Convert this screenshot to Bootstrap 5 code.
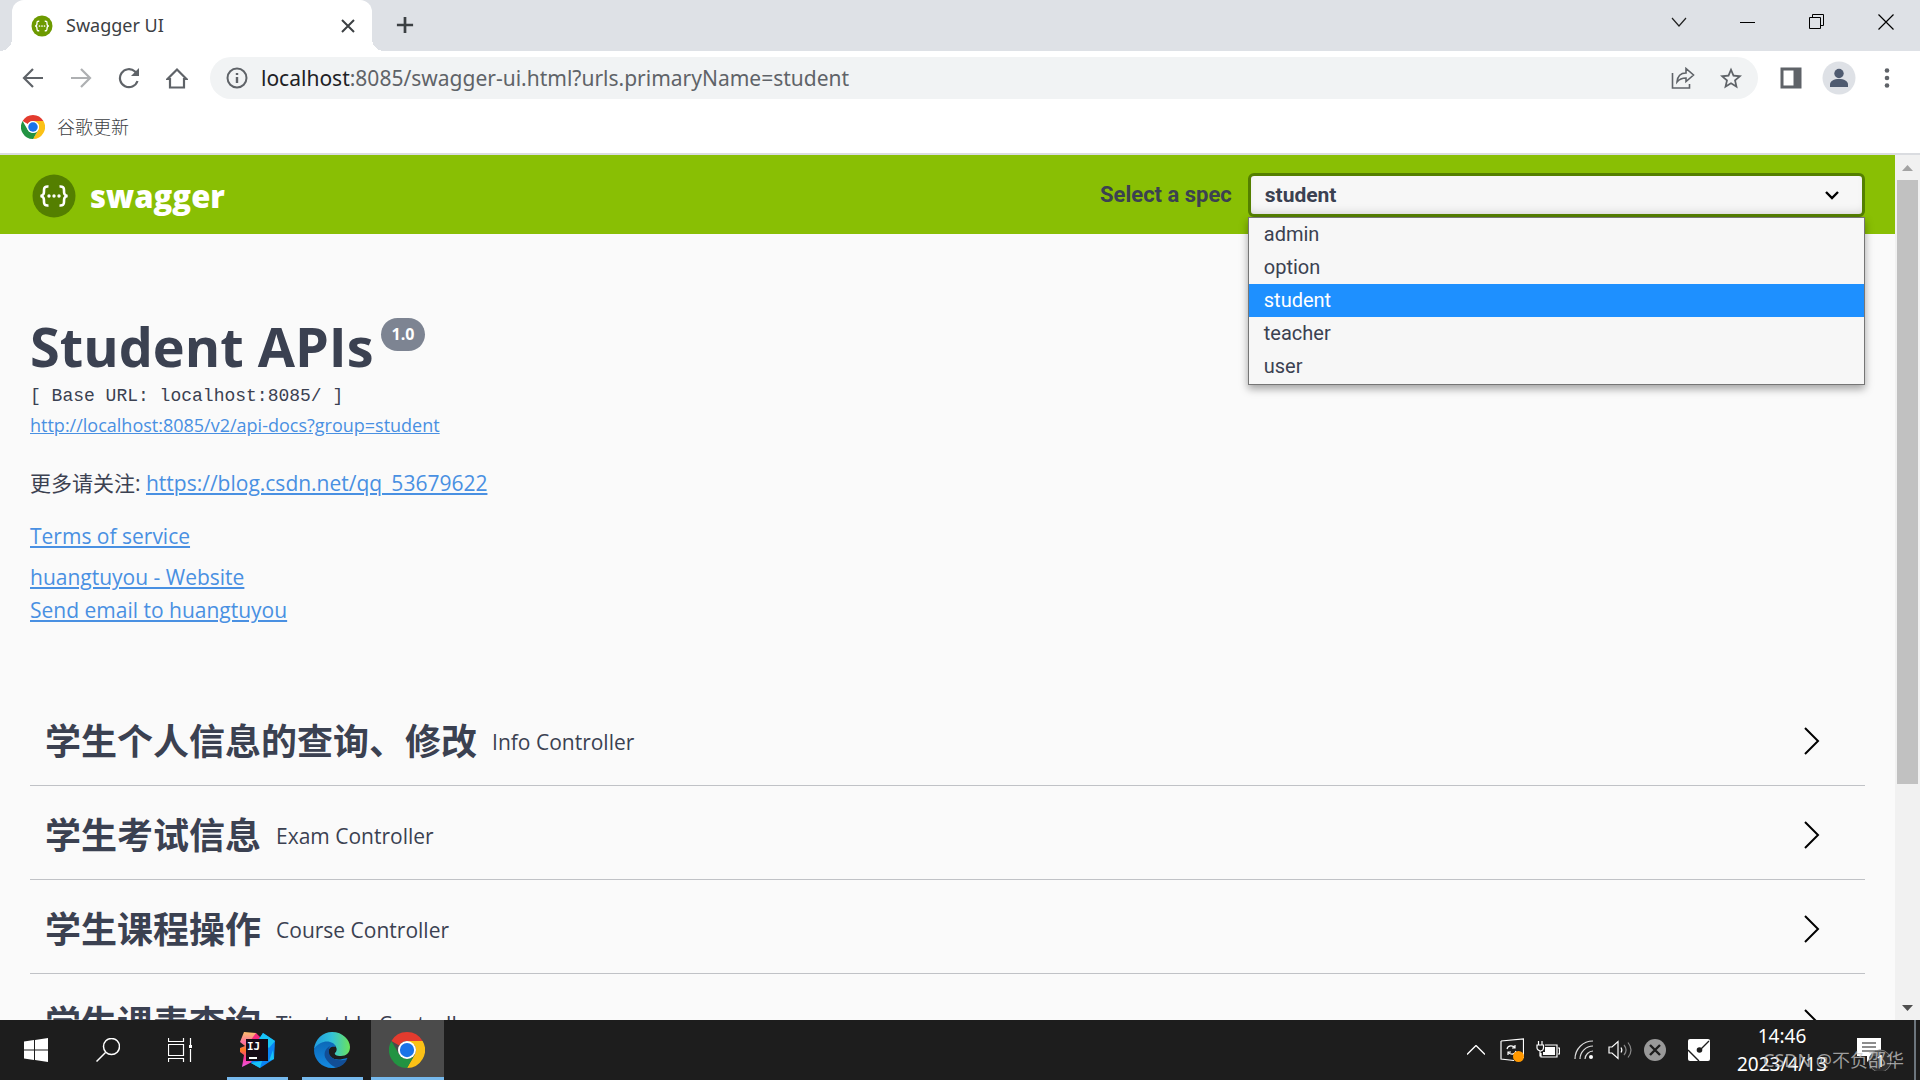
<!DOCTYPE html>
<html lang="zh-CN">
<head>
<meta charset="utf-8">
<meta name="viewport" content="width=device-width, initial-scale=1">
<title>Swagger UI</title>
<link href="https://cdn.jsdelivr.net/npm/bootstrap@5.3.0/dist/css/bootstrap.min.css" rel="stylesheet">
<style>
  :root {
    --chrome-font: "Noto Sans", "Noto Sans CJK SC", sans-serif;
    --page-font: "Open Sans", "Noto Sans CJK SC", sans-serif;
    --head-font: "Roboto", "Noto Sans CJK SC", sans-serif;
    --ink: #3b4151;
  }
  body { font-family: var(--chrome-font); background: #fff; }
  button { border: 0; background: none; padding: 0; }
  svg { display: block; flex: none; }

  /* browser frame */
  .tab-strip { height: 51px; background: #dee1e6; padding-left: 12px; }
  .browser-tab { width: 360px; background: #fff; border-radius: 12px 12px 0 0; padding: 0 14px 0 19px; gap: 13px; font-size: 18px; line-height: 51px; color: #3c4043; }
  .browser-tab::before, .browser-tab::after { content: ""; position: absolute; bottom: 0; width: 12px; height: 12px; }
  .browser-tab::before { right: 100%; background: radial-gradient(circle at 0 0, transparent 12px, #fff 12px); }
  .browser-tab::after { left: 100%; background: radial-gradient(circle at 100% 0, transparent 12px, #fff 12px); }
  .win-btn { width: 69px; height: 43px; }
  .tool-row { height: 54px; padding: 0 9px; }
  .tool-btn { width: 48px; height: 42px; color: #5f6368; }
  .address-box { height: 42px; border-radius: 21px; background: #f1f3f4; margin: 0 9px; padding: 0 3px 0 16px; gap: 13px; }
  .address-text { font-size: 21px; line-height: 42px; color: #5f6368; }
  .address-text b { font-weight: 400; color: #202124; }
  .bookmark-row { height: 50px; padding: 0 21px 4px; border-bottom: 2px solid #dadce0; font-size: 18px; }
  .bookmark-row a { color: #3c4043; font-weight: 300; }

  /* swagger page */
  .page-view { background: #fafafa; color: var(--ink); font-family: var(--page-font); }
  .spec-bar { height: 79px; background: #89bf04; padding: 0 30px; }
  .swagger-home { gap: 14px; padding-top: 2px; }
  .swagger-word { font-size: 31px; line-height: 40px; font-weight: 800; color: #fff; }
  .spec-form { width: 765px; max-width: 60%; gap: 16px; font-family: var(--head-font); }
  .spec-form label { font-size: 22px; font-weight: 700; }
  .spec-select { width: 100%; height: 44px; border: 3px solid #547f00; border-radius: 6px; background: #f7f7f7; box-shadow: inset 0 -6px 8px -4px rgba(0,0,0,.12); padding: 2px 14px 0; font-size: 21px; font-weight: 700; color: var(--ink); appearance: none; outline: 0; }
  .spec-caret { position: absolute; right: 26px; top: 17px; pointer-events: none; }
  .spec-menu { position: absolute; z-index: 5; top: 100%; left: 0; right: 0; background: #f7f7f7; border: 1px solid #767676; box-shadow: 0 4px 8px rgba(0,0,0,.35); font-size: 20px; line-height: 33px; padding-bottom: 1px; }
  .spec-menu li { padding: 0 15px; }
  .spec-menu .chosen { background: #1e90ff; color: #fff; }

  .api-body { padding: 81px 30px 0; }
  .api-body a { color: #4990e2; }
  .api-head { gap: 7px; }
  .api-title { font-size: 54px; line-height: 62px; font-weight: 700; margin: 0; }
  .api-version { font-size: 16px; line-height: 33px; font-weight: 700; color: #fff; background: #7d8492; border-radius: 17px; padding: 0 11px; margin-top: 3px; }
  .api-base { font-family: "Liberation Mono", monospace; font-size: 18px; line-height: 28px; margin: 5px 0 0; }
  .api-docs { font-size: 18px; line-height: 30px; }
  .api-info { font-size: 21px; line-height: 33px; padding: 27px 0 65px; }
  .api-info p { margin: 0 0 20px; }
  .api-info .terms-line { margin-bottom: 8px; }
  .api-info .contact-line { margin-bottom: 0; }
  .tag-row { height: 94px; border-bottom: 1px solid #c0c2c6; padding: 6px 39px 0 15px; gap: 15px; }
  .tag-row h2 { font-size: 36px; line-height: 48px; font-weight: 700; margin: 0; white-space: nowrap; }
  .tag-row span { font-size: 21px; line-height: 30px; }
  .scroll-track { width: 25px; background: #f1f1f1; padding: 25px 2px 0; }
  .scroll-thumb { height: 604px; background: #c1c1c1; }

  /* desktop task bar */
  .task-bar { height: 60px; background: #1d1d1d; color: #fff; }
  .task-btn { width: 72px; height: 60px; }
  .task-apps { padding-left: 11px; gap: 14px; }
  .task-app { width: 61px; height: 60px; border-bottom: 3px solid #76b9ed; padding: 3px 2px 0 0; }
  .task-app.active-app { width: 73px; background: #4b4b4b; margin-left: -6px; }
  .tray-btn { width: 36px; height: 60px; }
  .note-btn { width: 64px; height: 60px; }
  .tray-clock { width: 120px; font-size: 19px; line-height: 28px; padding-top: 2px; }
  .watermark { position: absolute; right: 16px; bottom: 6px; font-size: 18px; line-height: 28px; color: rgba(200,200,200,.75); }
</style>
<script src="https://cdn.jsdelivr.net/npm/bootstrap@5.3.0/dist/js/bootstrap.bundle.min.js"></script>
</head>
<body class="d-flex flex-column vh-100 overflow-hidden">

<svg width="0" height="0" class="position-absolute" aria-hidden="true">
  <symbol id="chrome-logo" viewBox="0 0 48 48">
    <path fill="#e33b2e" d="M24 0a24 24 0 0 1 20.8 12H24a12 12 0 0 0-10.4 6L3.2 12A24 24 0 0 1 24 0z"/>
    <path fill="#fbc116" d="M44.8 12A24 24 0 0 1 24 48l10.4-18A12 12 0 0 0 34.4 18L24 12z"/>
    <path fill="#229342" d="M3.2 12 13.6 30A12 12 0 0 0 29 35L24 48A24 24 0 0 1 3.2 12z"/>
    <path fill="#229342" d="M13.6 30A12 12 0 0 0 34.4 30L24 48z"/>
    <circle cx="24" cy="24" r="12" fill="#fff"/><circle cx="24" cy="24" r="9.5" fill="#1a73e8"/>
  </symbol>
  <symbol id="swagger-logo" viewBox="0 0 44 44">
    <g fill="none" stroke="#fff" stroke-width="2.6"><path d="M16.5 12.5c-3.5-.3-4.500 1-4.500 3.500 0 3 .2 5.500-3.500 6 3.700.5 3.500 3 3.500 6 0 2.500 1 3.800 4.500 3.500"/><path d="M27.500 12.500c3.500-.3 4.500 1 4.500 3.500 0 3-.2 5.500 3.500 6-3.700.5-3.500 3-3.500 6 0 2.500-1 3.800-4.500 3.500"/></g>
    <g fill="#fff"><circle cx="17" cy="22" r="1.7"/><circle cx="22" cy="22" r="1.7"/><circle cx="27" cy="22" r="1.7"/></g>
  </symbol>
</svg>

<header>
  <div class="tab-strip d-flex align-items-start">
    <div class="browser-tab position-relative d-flex align-items-center">
      <svg width="22" height="22" viewBox="0 0 44 44"><circle cx="22" cy="22" r="21" fill="#6d9a00"/><use href="#swagger-logo"/></svg>
      <span class="flex-grow-1">Swagger UI</span>
      <button aria-label="Close tab"><svg width="20" height="20" viewBox="0 0 20 20" stroke="#3c4043" stroke-width="2"><path d="m4 4 12 12M16 4 4 16"/></svg></button>
    </div>
    <button class="ms-4 mt-3" aria-label="New tab"><svg width="18" height="18" viewBox="0 0 20 20" stroke="#3c4043" stroke-width="3"><path d="M10 1v18M1 10h18"/></svg></button>
    <div class="ms-auto d-flex">
      <button class="win-btn d-flex align-items-center justify-content-center" aria-label="Search tabs"><svg width="16" height="10" fill="none" stroke="#222" stroke-width="1.2"><path d="m1 1 7 8 7-8"/></svg></button>
      <button class="win-btn d-flex align-items-center justify-content-center" aria-label="Minimize"><svg width="16" height="16" stroke="#000"><path d="M0 8.500h15"/></svg></button>
      <button class="win-btn d-flex align-items-center justify-content-center" aria-label="Restore"><svg width="16" height="16" fill="none" stroke="#000"><path d="M.5 3.500h11v11H.5zM3.500 3V.5h11v11h-3"/></svg></button>
      <button class="win-btn d-flex align-items-center justify-content-center" aria-label="Close"><svg width="16" height="16" stroke="#000" stroke-width="1.2"><path d="m.5.5 15 15M15.500.5l-15 15"/></svg></button>
    </div>
  </div>

  <div class="tool-row d-flex align-items-center">
    <button class="tool-btn d-flex align-items-center justify-content-center" aria-label="Back"><svg width="22" height="20" fill="none" stroke="currentColor" stroke-width="2.2"><path d="M21 10H3M11 1l-9 9 9 9"/></svg></button>
    <button class="tool-btn d-flex align-items-center justify-content-center opacity-50" aria-label="Forward"><svg width="22" height="20" fill="none" stroke="currentColor" stroke-width="2.2"><path d="M1 10h18M11 1l9 9-9 9"/></svg></button>
    <button class="tool-btn d-flex align-items-center justify-content-center" aria-label="Reload"><svg width="22" height="22" fill="none" stroke="currentColor" stroke-width="2.2"><path d="M19.500 14A9 9 0 1 1 17 4.500L20 8"/><path d="M21 1v8h-8z" fill="currentColor" stroke="none"/></svg></button>
    <button class="tool-btn d-flex align-items-center justify-content-center" aria-label="Home"><svg width="22" height="22" fill="none" stroke="currentColor" stroke-width="2.2"><path d="m1.500 12 9.500-9.500 9.500 9.500H18v8.500H4V12z"/></svg></button>
    <div class="address-box flex-grow-1 d-flex align-items-center">
      <svg width="22" height="22" fill="none" stroke="#5f6368" stroke-width="2"><circle cx="11" cy="11" r="9.5"/><path d="M11 10v6M11 6v2" stroke-width="2.4"/></svg>
      <div class="address-text flex-grow-1"><b>localhost</b>:8085/swagger-ui.html?urls.primaryName=student</div>
      <div class="d-flex">
        <button class="tool-btn d-flex align-items-center justify-content-center" aria-label="Share"><svg width="24" height="22" fill="none" stroke="currentColor" stroke-width="1.6"><path d="M1.500 6v15h17v-4M6 15c.5-6 4-9 9-9V1.500L22.500 8 15 14.500V11c-4 0-6.500 1-9 4z"/></svg></button>
        <button class="tool-btn d-flex align-items-center justify-content-center" aria-label="Bookmark"><svg width="22" height="22" viewBox="0 0 24 24" fill="currentColor"><path d="m22 9.240-7.190-.62L12 2 9.190 8.630 2 9.240l5.460 4.730L5.820 21 12 17.270 18.180 21l-1.630-7.030zM12 15.400l-3.760 2.270 1-4.280-3.320-2.880 4.380-.38L12 6.100l1.710 4.040 4.380.38-3.320 2.880 1 4.280z" transform="translate(-2.4 -1.8) scale(1.2)"/></svg></button>
      </div>
    </div>
    <button class="tool-btn d-flex align-items-center justify-content-center" aria-label="Side panel"><svg width="22" height="22" fill="none" stroke="currentColor"><path d="M2 2h18v18H2z" stroke-width="3"/><path d="M17 1v20" stroke-width="7"/></svg></button>
    <button class="tool-btn d-flex align-items-center justify-content-center" aria-label="Profile"><svg width="34" height="34"><circle cx="17" cy="17" r="16.5" fill="#dee1e6"/><circle cx="17" cy="12.5" r="4.7" fill="#4f5b70"/><path d="M8 26v-2.500c0-3.500 4-5.500 9-5.500s9 2 9 5.500V26z" fill="#4f5b70"/></svg></button>
    <button class="tool-btn d-flex align-items-center justify-content-center" aria-label="Menu"><svg width="6" height="20" fill="currentColor"><circle cx="3" cy="2.5" r="2.3"/><circle cx="3" cy="10" r="2.3"/><circle cx="3" cy="17.5" r="2.3"/></svg></button>
  </div>

  <nav class="bookmark-row d-flex align-items-center">
    <a href="#" class="d-flex align-items-center gap-2 text-decoration-none"><svg width="24" height="24"><use href="#chrome-logo"/></svg><span class="ms-1">谷歌更新</span></a>
  </nav>
</header>

<div class="page-view d-flex flex-grow-1 overflow-hidden">
  <main class="flex-grow-1 overflow-hidden">
    <div class="spec-bar d-flex align-items-center justify-content-between">
      <a href="#" class="swagger-home d-flex align-items-center text-decoration-none">
        <svg width="46" height="44" viewBox="-2 0 46 44"><circle cx="22" cy="22" r="21.5" fill="#547f00"/><use href="#swagger-logo" width="44" height="44"/></svg>
        <span class="swagger-word">swagger</span>
      </a>
      <form class="spec-form d-flex align-items-center">
        <label for="spec" class="text-nowrap">Select a spec</label>
        <div class="position-relative flex-grow-1">
          <select id="spec" class="spec-select d-block">
            <option>admin</option><option>option</option><option selected>student</option><option>teacher</option><option>user</option>
          </select>
          <svg class="spec-caret" width="14" height="10" fill="none" stroke="#000" stroke-width="2.4"><path d="m1 2 6 6 6-6"/></svg>
          <ul class="spec-menu list-unstyled m-0" role="listbox" aria-label="Select a spec">
            <li role="option">admin</li>
            <li role="option">option</li>
            <li role="option" aria-selected="true" class="chosen">student</li>
            <li role="option">teacher</li>
            <li role="option">user</li>
          </ul>
        </div>
      </form>
    </div>

    <div class="api-body">
      <div class="api-head d-flex align-items-start">
        <h1 class="api-title">Student APIs</h1>
        <span class="api-version">1.0</span>
      </div>
      <p class="api-base">[ Base URL: localhost:8085/ ]</p>
      <a href="#" class="api-docs d-block">http://localhost:8085/v2/api-docs?group=student</a>
      <div class="api-info">
        <p>更多请关注: <a href="#">https://blog.csdn.net/qq_53679622</a></p>
        <p class="terms-line"><a href="#">Terms of service</a></p>
        <p class="contact-line"><a href="#">huangtuyou - Website</a><br><a href="#">Send email to huangtuyou</a></p>
      </div>

      <section>
        <div class="tag-row d-flex align-items-center"><h2>学生个人信息的查询、修改</h2><span class="flex-grow-1">Info Controller</span><button aria-label="Expand"><svg width="30" height="30" fill="none" stroke="#000" stroke-width="2"><path d="m9 1 13 13L9 27"/></svg></button></div>
        <div class="tag-row d-flex align-items-center"><h2>学生考试信息</h2><span class="flex-grow-1">Exam Controller</span><button aria-label="Expand"><svg width="30" height="30" fill="none" stroke="#000" stroke-width="2"><path d="m9 1 13 13L9 27"/></svg></button></div>
        <div class="tag-row d-flex align-items-center"><h2>学生课程操作</h2><span class="flex-grow-1">Course Controller</span><button aria-label="Expand"><svg width="30" height="30" fill="none" stroke="#000" stroke-width="2"><path d="m9 1 13 13L9 27"/></svg></button></div>
        <div class="tag-row d-flex align-items-center"><h2>学生课表查询</h2><span class="flex-grow-1">Timetable Controller</span><button aria-label="Expand"><svg width="30" height="30" fill="none" stroke="#000" stroke-width="2"><path d="m9 1 13 13L9 27"/></svg></button></div>
      </section>
    </div>
  </main>
  <div class="scroll-track position-relative flex-shrink-0">
    <svg class="position-absolute top-0 start-0" width="25" height="25"><path d="m7 16 5.500-6 5.500 6z" fill="#a3a3a3"/></svg>
    <div class="scroll-thumb"></div>
    <svg class="position-absolute bottom-0 start-0" width="25" height="25"><path d="m7 10 5.500 6 5.500-6z" fill="#505050"/></svg>
  </div>
</div>

<footer class="task-bar position-relative d-flex flex-shrink-0">
  <button class="task-btn d-flex align-items-center justify-content-center" aria-label="Start"><svg width="24" height="24" fill="#fff"><path d="M0 3.500 10 2v9.500H0zM11 1.900 24 0v11.500H11zM0 12.500h10V22L0 20.500zM11 12.500h13V24l-13-1.900z"/></svg></button>
  <button class="task-btn d-flex align-items-center justify-content-center" aria-label="Search"><svg width="24" height="24" fill="none" stroke="#fff" stroke-width="1.5"><circle cx="15.5" cy="8.5" r="8"/><path d="M9.500 14.500.5 23.500"/></svg></button>
  <button class="task-btn d-flex align-items-center justify-content-center" aria-label="Task view"><svg width="24" height="24" fill="none" stroke="#fff" stroke-width="1.2"><path d="M.5 0v3.500h15V0M.5 24v-3.500h15V24M.5 6.500h15v11H.5zM22.500 0v7M22.500 11v13"/><path d="M21 7h3v3h-3z" fill="#fff" stroke="none"/></svg></button>
  <div class="task-apps d-flex">
    <button class="task-app d-flex align-items-center justify-content-center" aria-label="IntelliJ IDEA"><svg width="36" height="36">
      <defs><linearGradient id="ij-warm" x1="0" y1="0" x2="0" y2="1"><stop offset="0" stop-color="#fdc06a"/><stop offset=".3" stop-color="#fb6fa0"/><stop offset=".5" stop-color="#fd7b1e"/><stop offset=".75" stop-color="#f8349a"/><stop offset="1" stop-color="#f05be5"/></linearGradient></defs>
      <path fill="url(#ij-warm)" d="m5 0 12 1 3 11-3 16-14 7 2-12-4-3V16l5-2-5-4z"/>
      <path fill="#f7287d" d="m17 1 5 5 3 6H9z"/>
      <path fill="#0a84f5" d="m24 1 12 8-1 18-14 9-9-5 8-24z"/><path fill="#18c3f5" d="m24 1 12 8-6 7-10-9zM12 31l9 5 2-7zM30 29l5-2-1-9z"/>
      <path fill="#150b16" d="M7 7h22v22H7z"/><path fill="#fff" d="M10 25h8v2h-8z"/>
      <text x="8" y="18" fill="#fff" font-family="DejaVu Sans Mono" font-size="11" font-weight="700">IJ</text></svg></button>
    <button class="task-app d-flex align-items-center justify-content-center" aria-label="Edge"><svg width="36" height="36" viewBox="0 0 36 36">
      <defs><linearGradient id="edge-top"><stop offset="0" stop-color="#1f9be0"/><stop offset=".5" stop-color="#33c2d8"/><stop offset="1" stop-color="#6be35a"/></linearGradient><linearGradient id="edge-side" x1="0" y1="0" x2="0" y2="1"><stop offset="0" stop-color="#0c67b6"/><stop offset="1" stop-color="#1489e0"/></linearGradient></defs>
      <path fill="url(#edge-side)" d="M0 18C1 11 6 8 12 8c7 0 10 3 9.500 7-4-1-7 1-7 5 0 5 6 9 14 7l5-1C29 34 23 36 18 36 8 36 0 28 0 18z"/>
      <path fill="#124e96" d="M16 14c-5 3-7 8-4 13 3 5 8 8 11 8.500 5-1.500 8-4 10-8-8 2-14 0-17-4-2-4-1-7 0-9.500z"/>
      <path fill="url(#edge-top)" d="M0 17C1 7 9 0 18 0c11 0 18 8 18 15 0 6-4 9-9 9-5 0-7-1.500-6-3 2-2 2-4 1-6C20 9 8 6 0 17z"/></svg></button>
    <button class="task-app active-app d-flex align-items-center justify-content-center" aria-label="Chrome"><svg width="36" height="36"><use href="#chrome-logo"/></svg></button>
  </div>

  <div class="ms-auto d-flex">
    <button class="tray-btn d-flex align-items-center justify-content-center" aria-label="Hidden icons"><svg width="18" height="10" fill="none" stroke="#fff" stroke-width="1.4"><path d="m0 9.500 9-9 9 9"/></svg></button>
    <button class="tray-btn d-flex align-items-center justify-content-center" aria-label="Updates"><svg width="24" height="24" fill="none" stroke="#fff" stroke-width="1.2"><path d="M1 3 23.500.8V20M1 3v18l13 1.500"/><path d="M7 11c1-4 6-4 8-1m0-3v3h-3M16 13c-1 4-6 4-8 1m0 3v-3h3"/><circle cx="18.5" cy="18.5" r="5.5" fill="#ff9800" stroke="none"/></svg></button>
    <button class="tray-btn d-flex align-items-center justify-content-center" aria-label="Battery"><svg width="24" height="20" fill="none" stroke="#fff" stroke-width="1.2"><path d="M9 5h12v12H5v-4M22 8h1.500v6H22M2.500 1v4M6 1v4M1 5h6.500v3c0 1.500-1.500 3-3 3S1 9.500 1 8zM4 11v5h1"/><path d="M9 7h10v8H7v-3h2z" fill="#fff" stroke="none"/></svg></button>
    <button class="tray-btn d-flex align-items-center justify-content-center" aria-label="Network"><svg width="20" height="20" fill="none" stroke="#ddd" stroke-width="1.2"><path d="M1 19C1 9 9 1 19 1M6 19C6 12 12 6 19 6M11 19c0-4 4-8 8-8"/><circle cx="17" cy="17" r="2" fill="#fff" stroke="none"/></svg></button>
    <button class="tray-btn d-flex align-items-center justify-content-center" aria-label="Volume"><svg width="24" height="20" fill="none" stroke="#fff" stroke-width="1.2"><path d="M1 7h3l6-5.500v17L4 13H1zM13 7.500c1 1.500 1 3.500 0 5"/><path d="M16 5c2.500 3 2.500 7 0 10M20 2.500c4 5 4 10 0 15" stroke="#888"/></svg></button>
    <button class="tray-btn d-flex align-items-center justify-content-center" aria-label="Status"><svg width="24" height="22"><circle cx="11" cy="11" r="11" fill="#999"/><path d="m6 6 10 10M16 6 6 16" stroke="#1d1d1d" stroke-width="2.4"/></svg></button>
    <button class="tray-btn d-flex align-items-center justify-content-center ms-2" aria-label="Input"><svg width="24" height="22"><rect width="22" height="22" rx="2" fill="#fff"/><path d="M0 11 11 22M12 11l9-9" stroke="#1d1d1d" stroke-width="1.4"/><circle cx="11.5" cy="11" r="2.8" fill="#1d1d1d"/></svg></button>
    <div class="tray-clock text-center ms-1"><div>14:46</div><div>2023/4/13</div></div>
    <button class="note-btn d-flex align-items-center justify-content-center me-2" aria-label="Notifications"><svg width="38" height="42"><path d="M2 9h24v18h-8l-6 6v-6H2z" fill="#fff"/><path d="M7 14h14M7 18h14M7 22h14" stroke="#1d1d1d" stroke-width="1.2"/><circle cx="25" cy="32" r="11" fill="#333" fill-opacity=".85" stroke="#777"/><text x="21" y="38" fill="#fff" font-size="16" font-family="Noto Sans">1</text></svg></button>
    <div class="border-start border-2 border-secondary ps-1"></div>
  </div>
  <div class="watermark">CSDN @不负邵华</div>
</footer>
</body>
</html>
